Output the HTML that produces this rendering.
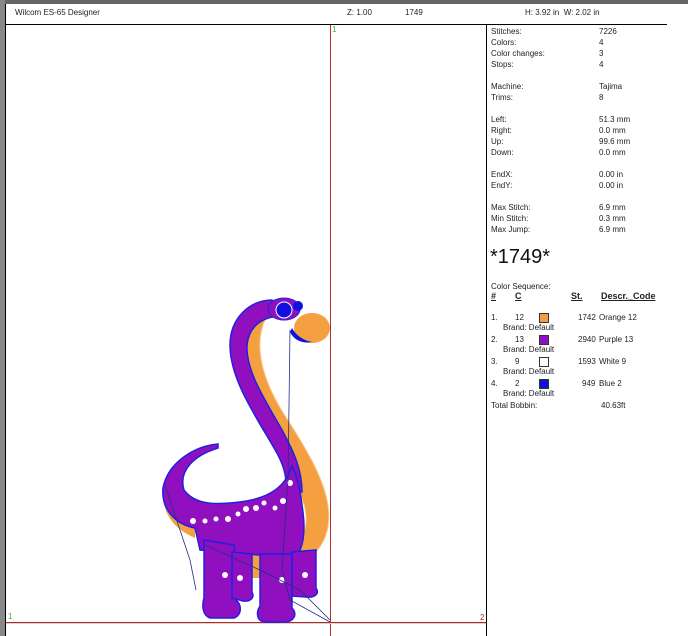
<!DOCTYPE html>
<html><head><meta charset="utf-8"><style>
html,body{margin:0;padding:0;background:#fff;}
body{width:688px;height:636px;position:relative;overflow:hidden;font-family:"Liberation Sans",sans-serif;font-size:8px;color:#222;}
.a{position:absolute;white-space:nowrap;}
.u{text-decoration:underline;font-weight:bold;}
</style></head><body>
<div class="a" style="left:0;top:0;width:688px;height:4px;background:#666"></div>
<div class="a" style="left:0;top:0;width:5px;height:636px;background:#888"></div>
<div class="a" style="left:5px;top:4px;width:1px;height:632px;background:#000"></div>
<div class="a" style="left:5px;top:24px;width:662px;height:1px;background:#000"></div>
<div class="a" style="left:486px;top:24px;width:1px;height:612px;background:#000"></div>
<div class="a" style="left:330px;top:25px;width:1px;height:611px;background:#b03030"></div>
<div class="a" style="left:6px;top:622px;width:480px;height:1px;background:#a03030"></div>
<div class="a" style="left:6px;top:623px;width:480px;height:1px;background:#f0c8c8"></div>
<div class="a" style="left:332px;top:25px;color:#4a4">1</div>
<div class="a" style="left:8px;top:612px;color:#4a4">1</div>
<div class="a" style="left:480px;top:613px;color:#933">2</div>

<div class="a" style="left:15px;top:8px">Wilcom ES-65 Designer</div>
<div class="a" style="left:347px;top:8px">Z: 1.00</div>
<div class="a" style="left:405px;top:8px">1749</div>
<div class="a" style="left:525px;top:8px">H: 3.92 in &nbsp;W: 2.02 in</div>

<div class="a" style="left:491px;top:26px;line-height:11px">Stitches:<br>Colors:<br>Color changes:<br>Stops:<br><br>Machine:<br>Trims:<br><br>Left:<br>Right:<br>Up:<br>Down:<br><br>EndX:<br>EndY:<br><br>Max Stitch:<br>Min Stitch:<br>Max Jump:</div>
<div class="a" style="left:599px;top:26px;line-height:11px">7226<br>4<br>3<br>4<br><br>Tajima<br>8<br><br>51.3 mm<br>0.0 mm<br>99.6 mm<br>0.0 mm<br><br>0.00 in<br>0.00 in<br><br>6.9 mm<br>0.3 mm<br>6.9 mm</div>

<div class="a" style="left:490px;top:246px;font-size:20px;color:#111">*1749*</div>
<div class="a" style="left:491px;top:282px">Color Sequence:</div>
<div class="a u" style="left:491px;top:291px;font-size:9px">#</div>
<div class="a u" style="left:515px;top:291px;font-size:9px">C</div>
<div class="a u" style="left:571px;top:291px;font-size:9px">St.</div>
<div class="a u" style="left:601px;top:291px;font-size:9px">Descr._Code</div>

<div class="a" style="left:491px;top:313px">1.</div><div class="a" style="left:515px;top:313px">12</div>
<div class="a" style="left:539px;top:313px;width:8px;height:8px;background:#f0a040;border:1px solid #333"></div>
<div class="a" style="left:578px;top:313px">1742</div><div class="a" style="left:599px;top:313px">Orange 12</div>
<div class="a" style="left:503px;top:323px">Brand: Default</div>
<div class="a" style="left:491px;top:335px">2.</div><div class="a" style="left:515px;top:335px">13</div>
<div class="a" style="left:539px;top:335px;width:8px;height:8px;background:#9010c0;border:1px solid #333"></div>
<div class="a" style="left:578px;top:335px">2940</div><div class="a" style="left:599px;top:335px">Purple 13</div>
<div class="a" style="left:503px;top:345px">Brand: Default</div>
<div class="a" style="left:491px;top:357px">3.</div><div class="a" style="left:515px;top:357px">9</div>
<div class="a" style="left:539px;top:357px;width:8px;height:8px;background:#fff;border:1px solid #333"></div>
<div class="a" style="left:578px;top:357px">1593</div><div class="a" style="left:599px;top:357px">White 9</div>
<div class="a" style="left:503px;top:367px">Brand: Default</div>
<div class="a" style="left:491px;top:379px">4.</div><div class="a" style="left:515px;top:379px">2</div>
<div class="a" style="left:539px;top:379px;width:8px;height:8px;background:#1010e0;border:1px solid #333"></div>
<div class="a" style="left:582px;top:379px">949</div><div class="a" style="left:599px;top:379px">Blue 2</div>
<div class="a" style="left:503px;top:389px">Brand: Default</div>
<div class="a" style="left:491px;top:401px">Total Bobbin:</div>
<div class="a" style="left:601px;top:401px">40.63ft</div>

<svg class="a" style="left:0;top:0" width="688" height="636" viewBox="0 0 688 636">
<path d="M266 318 C254 342 260 376 284 414 C306 448 324 478 328 505 C332 532 322 552 300 565 L284 562 C302 546 310 525 304 505 C296 480 278 455 260 425 C238 388 238 348 250 326 Z" fill="#f4a040" stroke="#f8d0a0" stroke-width="1"/>
<path d="M244 552 L292 552 L292 578 L244 578 Z" fill="#f4a040"/>
<path d="M163 490 C162 510 170 527 195 538 L195 520 C180 515 172 505 170 490 Z" fill="#f4a040"/>
<ellipse cx="312" cy="328" rx="18" ry="15" fill="#f4a040"/>
<path d="M272 300 C250 300 230 318 230 345 C230 382 260 422 278 455 C284 467 286 475 286 485 L302 492 C302 470 294 452 282 430 C262 395 246 370 247 345 C249 326 262 316 284 316 Z" fill="#9010c0" stroke="#2020e0" stroke-width="1.5"/>
<path d="M218 444 C195 446 168 462 163 488 C161 508 174 524 195 528 L200 550 L294 558 C304 550 306 530 302 505 C300 490 298 478 292 466 C286 485 272 498 240 502 C215 505 195 505 184 490 C178 470 195 455 218 448 Z" fill="#9010c0" stroke="#2020e0" stroke-width="1.5"/>
<path d="M204 540 L234 545 L236 600 C242 605 242 615 234 618 L210 618 C202 615 202 605 204 598 Z" fill="#9010c0" stroke="#2020e0" stroke-width="1.5"/>
<path d="M232 552 L252 554 L252 592 C255 598 250 602 243 601 L232 598 Z" fill="#9010c0" stroke="#2020e0" stroke-width="1.5"/>
<path d="M260 554 L292 554 L292 608 C298 614 294 622 284 622 L266 622 C256 622 256 612 260 606 Z" fill="#9010c0" stroke="#2020e0" stroke-width="1.5"/>
<path d="M292 552 L316 550 L316 588 C320 594 314 598 306 597 L292 596 Z" fill="#9010c0" stroke="#2020e0" stroke-width="1.5"/>
<ellipse cx="284" cy="309" rx="16" ry="11" fill="#9010c0" stroke="#2020e0"/>
<circle cx="284" cy="310" r="8" fill="#1010e0" stroke="#fff" stroke-width="1"/>
<circle cx="298" cy="306" r="5" fill="#1010e0"/>
<path d="M292 328 C296 335 302 340 312 342 C302 344 294 340 290 332 Z" fill="#1010e0"/>
<g fill="#fff">
<circle cx="193" cy="521" r="3"/><circle cx="205" cy="521" r="2.5"/><circle cx="216" cy="519" r="2.5"/><circle cx="228" cy="519" r="3"/><circle cx="238" cy="514" r="2.5"/><circle cx="246" cy="509" r="3"/><circle cx="256" cy="508" r="3"/><circle cx="264" cy="503" r="2.5"/><circle cx="275" cy="508" r="2.5"/><circle cx="283" cy="501" r="3"/><circle cx="290" cy="483" r="3"/>
<circle cx="225" cy="575" r="3"/><circle cx="240" cy="578" r="3"/><circle cx="282" cy="580" r="3"/><circle cx="305" cy="575" r="3"/>
</g>
<g stroke="#203080" stroke-width="0.8" fill="none">
<path d="M290 330 L288 480 L282 570 L290 600 L330 622"/>
<path d="M165 485 L190 560 L196 590"/>
<path d="M205 545 L260 570 L300 590 L330 620"/>
</g>
</svg>
</body></html>
